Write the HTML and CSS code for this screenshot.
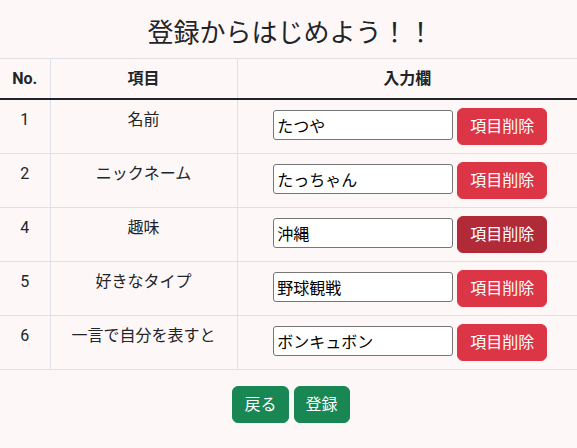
FILE: index.html
```html
<!DOCTYPE html>
<html lang="ja">
<head>
<meta charset="utf-8">
<title>登録</title>
<link rel="stylesheet" href="styles.css">
</head>
<body>
<div class="page">
  <h1 class="title">登録からはじめよう！！</h1>
  <table class="grid">
    <colgroup>
      <col class="c-no">
      <col class="c-item">
      <col class="c-input">
    </colgroup>
    <thead>
      <tr><th>No.</th><th>項目</th><th>入力欄</th></tr>
    </thead>
    <tbody>
      <tr><td>1</td><td>名前</td><td><input class="field" type="text" value="たつや"> <button class="btn btn-del">項目削除</button></td></tr>
      <tr><td>2</td><td>ニックネーム</td><td><input class="field" type="text" value="たっちゃん"> <button class="btn btn-del">項目削除</button></td></tr>
      <tr><td>4</td><td>趣味</td><td><input class="field" type="text" value="沖縄"> <button class="btn btn-del is-active">項目削除</button></td></tr>
      <tr><td>5</td><td>好きなタイプ</td><td><input class="field" type="text" value="野球観戦"> <button class="btn btn-del">項目削除</button></td></tr>
      <tr><td>6</td><td>一言で自分を表すと</td><td><input class="field" type="text" value="ボンキュボン"> <button class="btn btn-del">項目削除</button></td></tr>
    </tbody>
  </table>
  <div class="actions">
    <button class="btn btn-ok">戻る</button>
    <button class="btn btn-ok">登録</button>
  </div>
</div>
</body>
</html>
```
FILE: styles.css
```css
html, body {
  margin: 0;
  padding: 0;
  background: #fdf7f7;
}
body {
  font-family: Roboto, "Noto Sans CJK JP", sans-serif;
  font-size: 16px;
  line-height: 1.5;
  color: #212529;
}
.page {
  padding-top: 18px;
}
.title {
  margin: 0 0 8px;
  padding-left: 4px;
  font-size: 26px;
  font-weight: 400;
  line-height: 1.22;
  text-align: center;
}
.grid {
  width: 100%;
  border-collapse: collapse;
  vertical-align: top;
}
.c-no { width: 50px; }
.c-item { width: 187px; }
.grid th, .grid td {
  padding: 8px;
  text-align: center;
  vertical-align: top;
  border: 1px solid #dee2e6;
}
.grid th {
  font-weight: 700;
  padding-bottom: 7px;
}
.grid th:first-child, .grid td:first-child { border-left: 0; }
.grid th:last-child, .grid td:last-child { border-right: 0; }
.grid td:last-child { padding-left: 14px; }
.grid tbody tr:first-child td {
  border-top: 2px solid #212529;
}
.field {
  box-sizing: border-box;
  width: 180px;
  height: 30px;
  margin: 0;
  padding: 1px 3px;
  font-family: inherit;
  font-size: 16px;
  line-height: 24px;
  color: #000;
  background: #fff;
  border: 1px solid #767676;
  border-radius: 3px;
}
.btn {
  display: inline-block;
  margin: 0;
  padding: 6px 12px;
  font-family: inherit;
  font-size: 16px;
  line-height: 23px;
  color: #fff;
  border: 1px solid transparent;
  border-radius: 6px;
  cursor: pointer;
}
.btn-del {
  background: #dc3545;
  border-color: #dc3545;
}
.btn-del.is-active {
  background: #b02a37;
  border-color: #b02a37;
}
.btn-ok {
  padding: 6px 11px;
  background: #198754;
  border-color: #198754;
}
.actions {
  margin-top: 16px;
  text-align: center;
  display: flex;
  justify-content: center;
  gap: 5px;
  padding-left: 5px;
}
```
